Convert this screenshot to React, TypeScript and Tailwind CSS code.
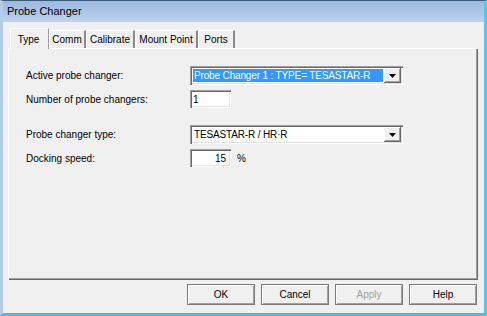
import React from "react";

const font = { fontFamily: '"Liberation Sans", Arial, sans-serif' };

function Tab({ label, w, active }: { label: string; w: string; active?: boolean }) {
  return (
    <div
      className={
        (active
          ? "h-[21px] bg-[#f0f0f0] border-t border-l border-white border-r border-r-[#a0a0a0] -mb-px relative z-10 justify-center pr-[2px] "
          : "h-[18px] border-t border-l border-white border-r-2 border-r-[#8a8a8a] justify-center ") +
        "flex items-center whitespace-nowrap " +
        w
      }
    >
      {label}
    </div>
  );
}

function Combo({ value, selected }: { value: string; selected?: boolean }) {
  return (
    <div className="w-[213px] h-[19px] flex items-center bg-white shadow-[inset_1px_1px_#a0a0a0,inset_2px_2px_#696969,inset_-1px_-1px_#ffffff,inset_-2px_-2px_#e3e3e3]">
      <div className="flex-1 min-w-0 h-full flex items-center pl-[3px] pr-[1px] py-[3px]">
        <div
          className={
            "w-full h-full flex items-center pl-[1px] whitespace-nowrap tracking-[-0.15px] " +
            (selected ? "bg-[#3399ff] text-white" : "")
          }
        >
          {value}
        </div>
      </div>
      <div className="w-[17px] h-[15px] mr-[2px] bg-[#f0f0f0] flex items-center justify-center shadow-[inset_-1px_-1px_#696969,inset_1px_1px_#ffffff,inset_-2px_-2px_#a0a0a0]">
        <svg width="7" height="4" viewBox="0 0 7 4">
          <path d="M0 0h7L3.5 4z" fill="#000" />
        </svg>
      </div>
    </div>
  );
}

function Edit({ value, right }: { value: string; right?: boolean }) {
  return (
    <div
      className={
        "w-[41px] h-[18px] bg-white flex items-center px-[3px] shadow-[inset_1px_1px_#a0a0a0,inset_2px_2px_#696969,inset_-1px_-1px_#ffffff,inset_-2px_-2px_#e3e3e3] " +
        (right ? "justify-end pr-[5px]" : "")
      }
    >
      {value}
    </div>
  );
}

function Btn({ label, disabled }: { label: string; disabled?: boolean }) {
  return (
    <div
      className={
        "w-[68px] h-[21px] flex items-center justify-center bg-[#f0f0f0] border border-[#7a7a7a] shadow-[inset_1px_1px_#ffffff,inset_-1px_-1px_#a0a0a0] " +
        (disabled ? "text-[#a0a0a0]" : "text-black")
      }
    >
      {label}
    </div>
  );
}

export default function App() {
  return (
    <div
      style={font}
      className="w-[487px] h-[316px] flex flex-col bg-[#f0f0f0] text-[10px] text-black border-t border-t-[#3b5a7c] border-l-[3px] border-l-[#b4cce8] border-r-[3px] border-r-[#5cc2ec] border-b-[3px] border-b-[#4ab8e6]"
    >
      <div className="h-[21px] flex items-center pl-[4px] text-[11px] bg-gradient-to-b from-[#9cb9dc] to-[#bcd3ee]">
        Probe Changer
      </div>

      <div className="flex-1 flex flex-col pl-[5px] pr-[6px]">
        <div className="mt-[5px] h-[21px] flex items-end pl-[2px]">
          <Tab label="Type" w="w-[39px]" active />
          <Tab label="Comm" w="w-[37px]" />
          <Tab label="Calibrate" w="w-[49px]" />
          <Tab label="Mount Point" w="w-[63px]" />
          <Tab label="Ports" w="w-[37px]" />
        </div>

        <div className="h-[232px] border-t border-l border-white shadow-[inset_-1px_-1px_#696969,inset_-2px_-2px_#a0a0a0] pl-[17px] pt-[17px]">
          <div className="grid grid-cols-[164px_auto] items-center">
            <div>Active probe changer:</div>
            <Combo value="Probe Changer 1 : TYPE= TESASTAR-R" selected />

            <div className="mt-[5px]">Number of probe changers:</div>
            <div className="mt-[5px]">
              <Edit value="1" />
            </div>

            <div className="mt-[17px]">Probe changer type:</div>
            <div className="mt-[17px]">
              <Combo value="TESASTAR-R / HR·R" />
            </div>

            <div className="mt-[5px]">Docking speed:</div>
            <div className="mt-[5px] flex items-center gap-[6px]">
              <Edit value="15" right />
              <span>%</span>
            </div>
          </div>
        </div>

        <div className="mt-[4px] flex justify-end gap-[6px] pr-[1px]">
          <Btn label="OK" />
          <Btn label="Cancel" />
          <Btn label="Apply" disabled />
          <Btn label="Help" />
        </div>
      </div>
    </div>
  );
}
